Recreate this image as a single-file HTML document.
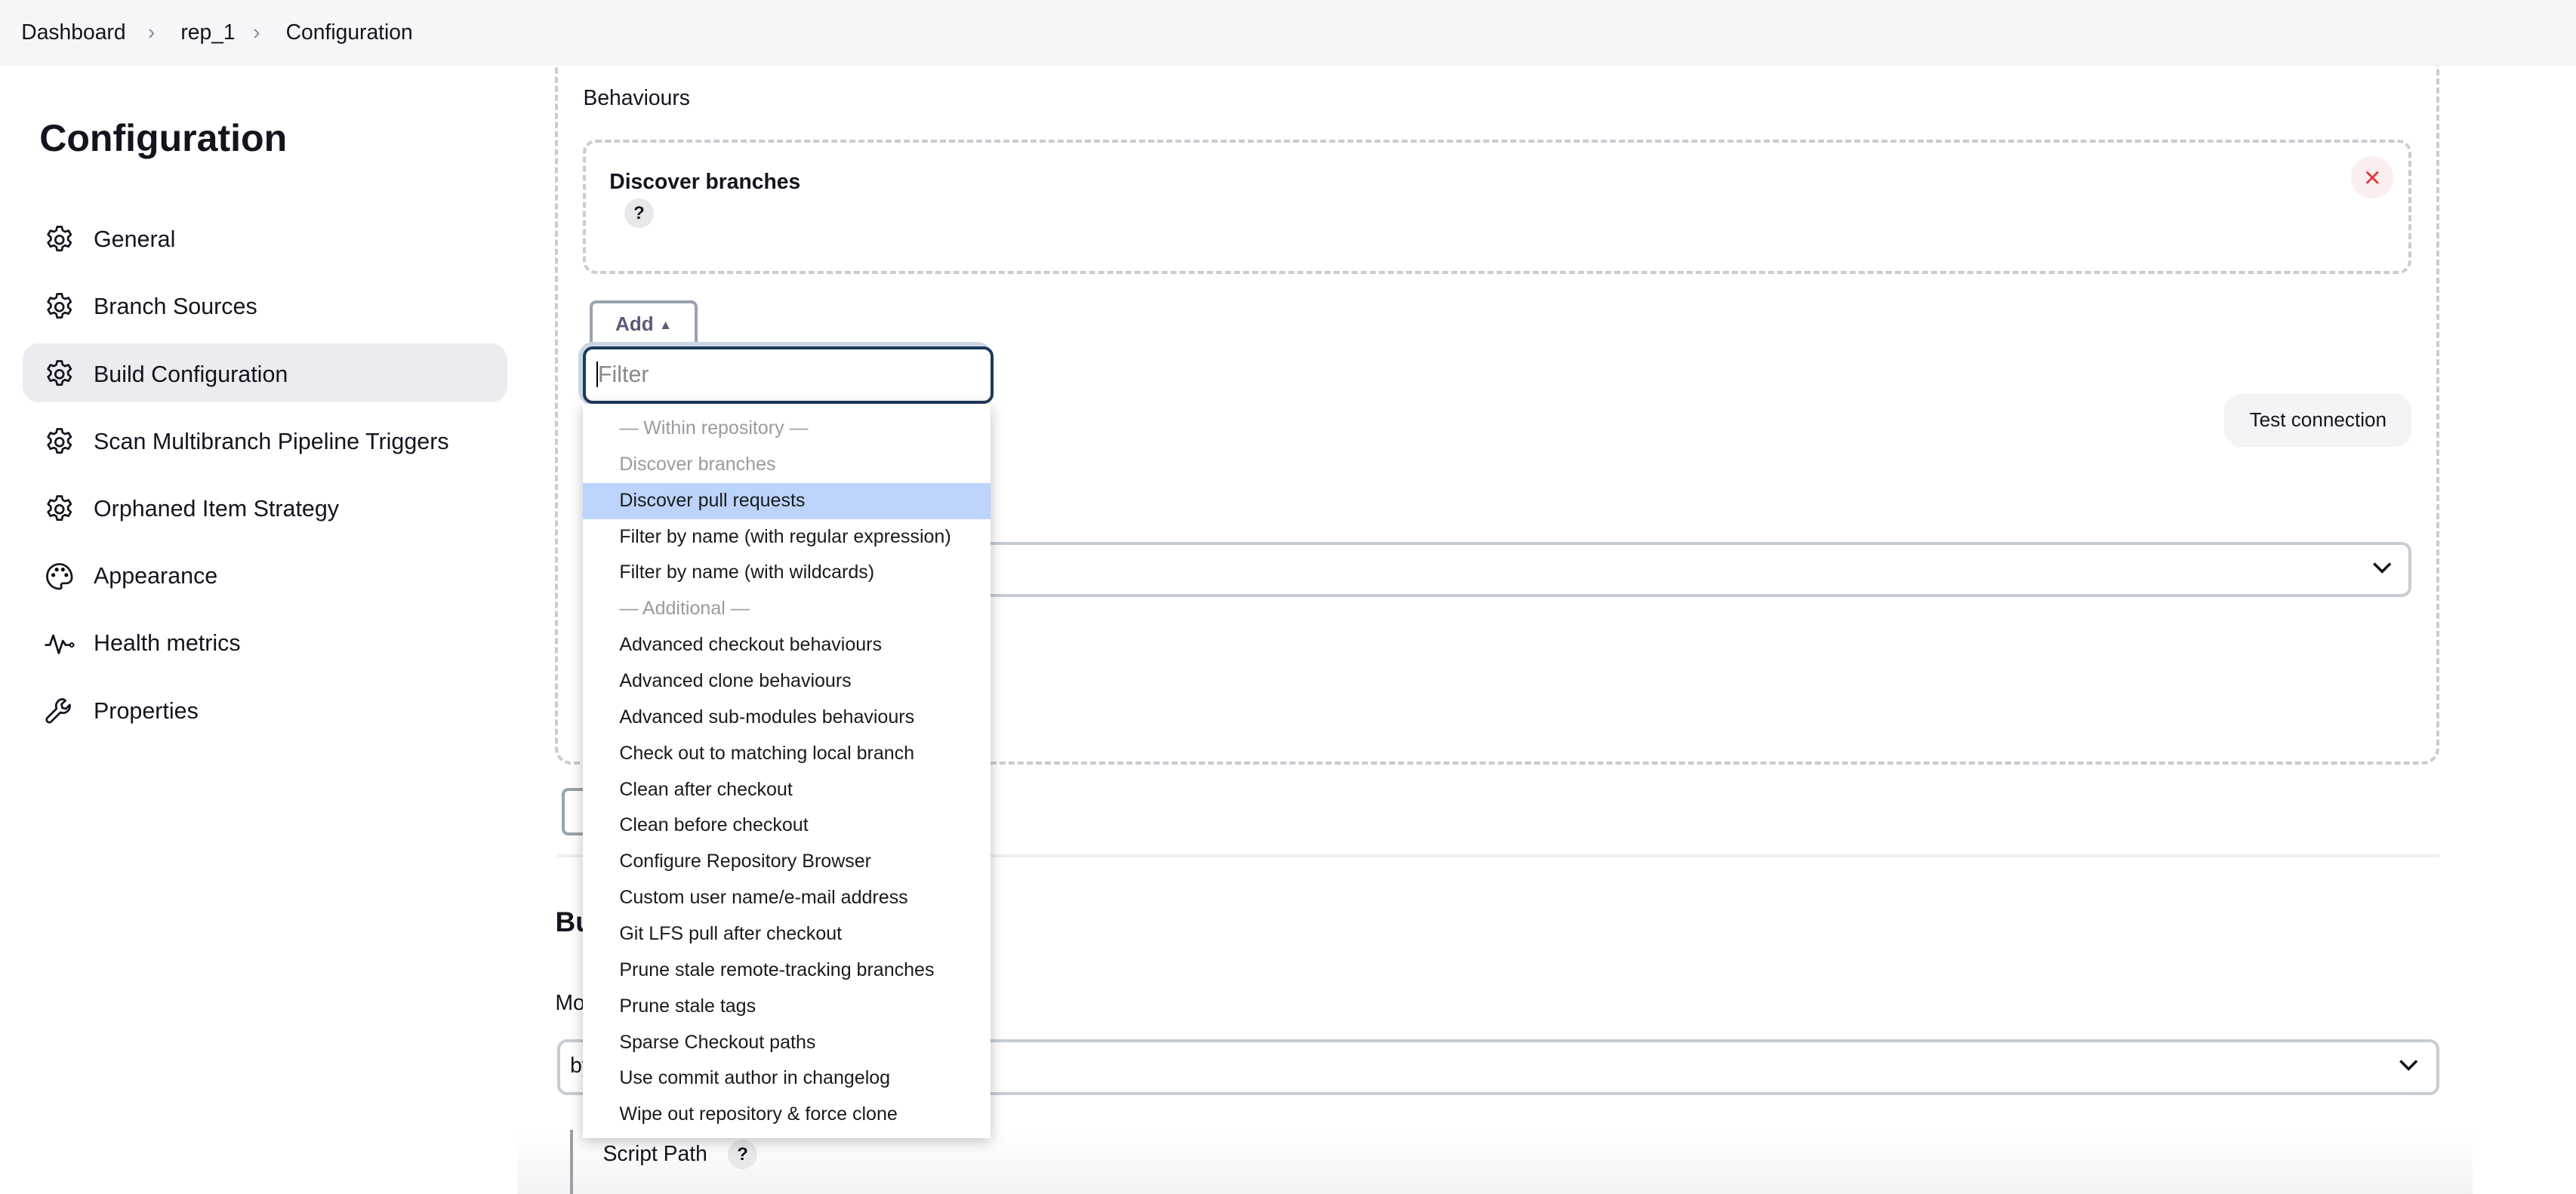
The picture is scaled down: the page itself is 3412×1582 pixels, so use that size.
<!DOCTYPE html>
<html><head><meta charset="utf-8">
<style>
html,body{margin:0;padding:0;}
body{width:1568px;height:727px;zoom:2.176;overflow:hidden;position:relative;background:#fff;font-family:"Liberation Sans",sans-serif;color:#14141f;}
.a{position:absolute;}
.hdr{left:0;top:0;width:1568px;height:40px;background:#f6f6f8;z-index:5;}
.bc{top:12px;font-size:13px;z-index:6;}
.chev{top:12px;font-size:13px;color:#8a8a96;z-index:6;}
.h1{left:24px;top:71px;font-size:23px;font-weight:bold;}
.item{left:26px;height:20px;display:flex;align-items:center;font-size:14px;}
.item svg{width:20px;height:20px;margin-right:11px;}
.active{left:14px;top:209px;width:295px;height:36px;background:#ebebf0;border-radius:10px;}
.outer{left:338px;top:-12px;width:1143px;height:474px;border:2px dashed #c8cdd2;border-radius:10px;}
.db{left:355px;top:85px;width:1109px;height:78px;border:2px dashed #c8cdd2;border-radius:8px;}
.q{width:18px;height:18px;border-radius:50%;background:#e8e8ea;font-size:11px;font-weight:bold;text-align:center;line-height:18px;}
.dd{left:355px;top:246px;width:248px;height:447px;background:#fff;box-shadow:0 2px 8px rgba(0,0,0,.25);}
.dd div{height:22px;line-height:22px;padding-left:22px;font-size:11.5px;color:#1a1a1a;white-space:nowrap;}
.dd .g{color:#9a9aa0;}
.dd .hl{background:#bcd4fb;}
.sel{border:2px solid #c6ccd2;border-radius:6px;background:#fff;}
</style></head><body>
<div class="a outer"></div>
<div class="a hdr"></div>
<div class="a bc" style="left:13px">Dashboard</div>
<div class="a chev" style="left:90px">&#x203A;</div>
<div class="a bc" style="left:110px">rep_1</div>
<div class="a chev" style="left:154px">&#x203A;</div>
<div class="a bc" style="left:174px">Configuration</div>

<div class="a h1">Configuration</div>
<div class="a active"></div>

<svg width="0" height="0" style="position:absolute"><defs>
<symbol id="gear" viewBox="0 0 24 24"><path d="M10.3 2.5h3.4l.6 2.6 1.7 1 2.6-.8 1.7 2.9-2 1.9v2l2 1.9-1.7 2.9-2.6-.8-1.7 1-.6 2.6h-3.4l-.6-2.6-1.7-1-2.6.8-1.7-2.9 2-1.9v-2l-2-1.9 1.7-2.9 2.6.8 1.7-1z" fill="none" stroke="#14141f" stroke-width="1.5" stroke-linejoin="round"/><circle cx="12" cy="12" r="3" fill="none" stroke="#14141f" stroke-width="1.5"/></symbol>
</defs></svg>

<div class="a item" style="top:136px"><svg><use href="#gear"/></svg>General</div>
<div class="a item" style="top:177px"><svg><use href="#gear"/></svg>Branch Sources</div>
<div class="a item" style="top:218px"><svg><use href="#gear"/></svg>Build Configuration</div>
<div class="a item" style="top:259px"><svg><use href="#gear"/></svg>Scan Multibranch Pipeline Triggers</div>
<div class="a item" style="top:300px"><svg><use href="#gear"/></svg>Orphaned Item Strategy</div>
<div class="a item" style="top:341px"><svg viewBox="0 0 24 24"><path d="M12 3a9 9 0 1 0 0 18c1.2 0 1.6-.8 1.3-1.8-.4-1.2.3-2.2 1.6-2.2H17a4 4 0 0 0 4-4c0-5.5-4-10-9-10z" fill="none" stroke="#14141f" stroke-width="1.5"/><circle cx="7.5" cy="11" r="1.4"/><circle cx="10" cy="7" r="1.4"/><circle cx="14.5" cy="7" r="1.4"/><circle cx="17" cy="11" r="1.4"/></svg>Appearance</div>
<div class="a item" style="top:382px"><svg viewBox="0 0 24 24"><path d="M2 13h3l2.5-7 4 13 3-9 2 3h3" fill="none" stroke="#14141f" stroke-width="1.5" stroke-linejoin="round" stroke-linecap="round"/><circle cx="21" cy="13" r="1.3" fill="none" stroke="#14141f" stroke-width="1.2"/></svg>Health metrics</div>
<div class="a item" style="top:423px"><svg viewBox="0 0 24 24"><path d="M14.5 3.5a5 5 0 0 0-4.6 6.9L3 17.3a2 2 0 0 0 2.8 2.8l6.9-6.9a5 5 0 0 0 6.8-5.5l-2.8 2.8-2.6-.6-.6-2.6 2.8-2.8a5 5 0 0 0-1.8-1z" fill="none" stroke="#14141f" stroke-width="1.5" stroke-linejoin="round"/></svg>Properties</div>

<div class="a" style="left:355px;top:52px;font-size:13px">Behaviours</div>
<div class="a db"></div>
<div class="a" style="left:371px;top:103px;font-size:13px;font-weight:bold">Discover branches</div>
<div class="a q" style="left:380px;top:121px">?</div>
<div class="a" style="left:1431px;top:95px;width:26px;height:26px;border-radius:50%;background:#fbeeee;"><svg width="26" height="26" viewBox="0 0 26 26"><path d="M9.5 9.5l7 7M16.5 9.5l-7 7" stroke="#e0393e" stroke-width="1.3"/></svg></div>

<div class="a" style="left:359px;top:183px;width:62px;height:25px;border:2px solid #9aa3ad;border-radius:4px;font-size:12px;font-weight:bold;color:#5b5b78;text-align:center;line-height:25px;">Add <span style="font-size:8px;vertical-align:1px">&#9650;</span></div>

<div class="a" style="left:352px;top:208px;width:252px;height:39px;background:#c9d7e4;border-radius:9px;"></div>
<div class="a" style="left:355px;top:211px;width:246px;height:31px;border:2px solid #1e3a5a;border-radius:6px;background:#fff;"></div>
<div class="a" style="left:363px;top:220px;font-size:14px;color:#8a8a8a;"><span style="border-left:1px solid #000;margin-right:0"></span>Filter</div>

<div class="a" style="left:1354px;top:240px;width:114px;height:32px;background:#f4f4f6;border-radius:10px;font-size:12px;text-align:center;line-height:32px;">Test connection</div>

<div class="a sel" style="left:380px;top:330px;width:1084px;height:30px;"></div>
<svg class="a" style="left:1443px;top:340px" width="14" height="12" viewBox="0 0 14 12"><path d="M2 3l5 5 5-5" fill="none" stroke="#14141f" stroke-width="1.6"/></svg>

<div class="a" style="left:342px;top:480px;width:30px;height:25px;border:2px solid #9aa3ad;border-radius:4px;"></div>
<div class="a" style="left:339px;top:520px;width:1146px;height:2px;background:#eeeef2;"></div>
<div class="a" style="left:338px;top:552px;font-size:17px;font-weight:bold">Build Configuration</div>
<div class="a" style="left:338px;top:603px;font-size:13px">Mode</div>
<div class="a sel" style="left:339px;top:633px;width:1142px;height:30px;"></div>
<div class="a" style="left:347px;top:641px;font-size:13px">by Jenkinsfile</div>
<svg class="a" style="left:1459px;top:643px" width="14" height="12" viewBox="0 0 14 12"><path d="M2 3l5 5 5-5" fill="none" stroke="#14141f" stroke-width="1.6"/></svg>

<div class="a" style="left:315px;top:690px;width:1190px;height:37px;background:linear-gradient(#fff,#f3f3f5);"></div>
<div class="a" style="left:347px;top:688px;width:2px;height:39px;background:#9aa0a6;"></div>
<div class="a" style="left:367px;top:695px;font-size:13px">Script Path</div>
<div class="a q" style="left:443px;top:694px">?</div>

<div class="a dd">
<div class="g" style="margin-top:4px">— Within repository —</div>
<div class="g">Discover branches</div>
<div class="hl">Discover pull requests</div>
<div>Filter by name (with regular expression)</div>
<div>Filter by name (with wildcards)</div>
<div class="g">— Additional —</div>
<div>Advanced checkout behaviours</div>
<div>Advanced clone behaviours</div>
<div>Advanced sub-modules behaviours</div>
<div>Check out to matching local branch</div>
<div>Clean after checkout</div>
<div>Clean before checkout</div>
<div>Configure Repository Browser</div>
<div>Custom user name/e-mail address</div>
<div>Git LFS pull after checkout</div>
<div>Prune stale remote-tracking branches</div>
<div>Prune stale tags</div>
<div>Sparse Checkout paths</div>
<div>Use commit author in changelog</div>
<div>Wipe out repository &amp; force clone</div>
</div>
</body></html>
